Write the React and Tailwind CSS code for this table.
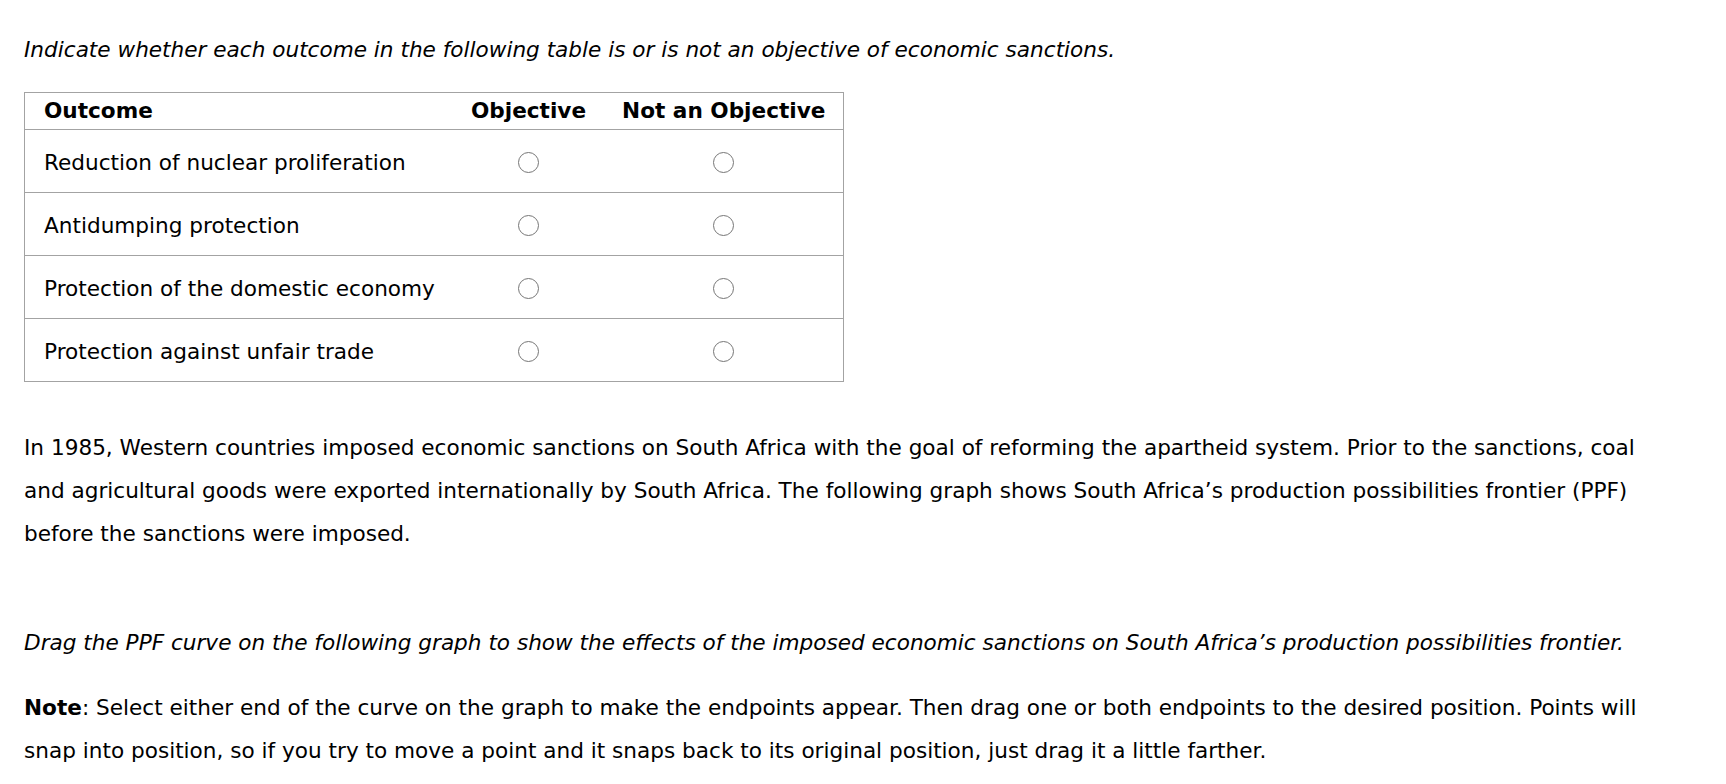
import React from 'react';

const outcomes = [
  'Reduction of nuclear proliferation',
  'Antidumping protection',
  'Protection of the domestic economy',
  'Protection against unfair trade',
];

function Radio() {
  return (
    <span className="inline-block w-[21px] h-[21px] rounded-full border-[1.5px] border-[#767676] bg-white align-middle" />
  );
}

export default function App() {
  return (
    <div
      className="min-h-screen bg-white text-black px-[24px] pt-[28px] text-[21.6px]"
      style={{ fontFamily: 'Verdana, "DejaVu Sans", sans-serif' }}
    >
      <p className="italic leading-[43px]">
        Indicate whether each outcome in the following table is or is not an objective of economic sanctions.
      </p>

      <table className="mt-[21px] w-[819px] border-collapse border border-[#a3a3a3] table-fixed">
        <colgroup>
          <col className="w-[428px]" />
          <col className="w-[152px]" />
          <col className="w-[239px]" />
        </colgroup>
        <thead>
          <tr className="border-b border-[#a3a3a3]">
            <th className="text-left font-bold pl-[19px] h-[37px] leading-[26px]">Outcome</th>
            <th className="text-center font-bold h-[37px] leading-[26px]">Objective</th>
            <th className="text-center font-bold h-[37px] leading-[26px]">Not an Objective</th>
          </tr>
        </thead>
        <tbody>
          {outcomes.map((o) => (
            <tr key={o} className="border-b border-[#a3a3a3]">
              <td className="pl-[19px] pt-[3px] h-[63px] leading-[26px]">{o}</td>
              <td className="text-center pt-[2px] h-[63px]">
                <Radio />
              </td>
              <td className="text-center pt-[2px] h-[63px]">
                <Radio />
              </td>
            </tr>
          ))}
        </tbody>
      </table>

      <p className="mt-[44px] leading-[43px] max-w-[1640px]">
        In 1985, Western countries imposed economic sanctions on South Africa with the goal of reforming the
        apartheid system. Prior to the sanctions, coal and agricultural goods were exported internationally by
        South Africa. The following graph shows South Africa’s production possibilities frontier (PPF) before the
        sanctions were imposed.
      </p>

      <p className="mt-[66px] italic leading-[43px]">
        Drag the PPF curve on the following graph to show the effects of the imposed economic sanctions on South
        Africa’s production possibilities frontier.
      </p>

      <p className="mt-[22px] leading-[43px] max-w-[1640px]">
        <span className="font-bold">Note</span>: Select either end of the curve on the graph to make the endpoints
        appear. Then drag one or both endpoints to the desired position. Points will snap into position, so if you
        try to move a point and it snaps back to its original position, just drag it a little farther.
      </p>
    </div>
  );
}
